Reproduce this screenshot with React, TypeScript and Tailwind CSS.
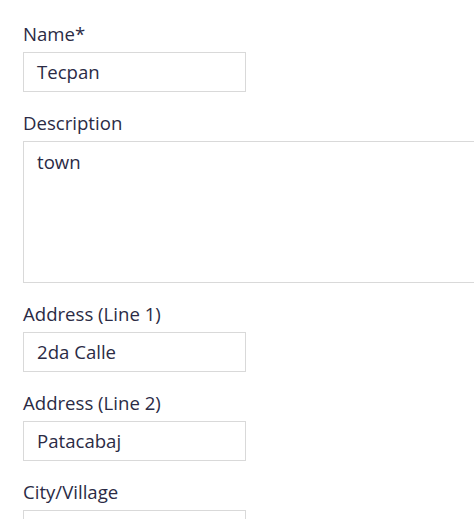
import React from "react";

const font = { fontFamily: '"Open Sans", "Noto Sans", sans-serif' };

function Field({ label, value }: { label: string; value: string }) {
  return (
    <div className="mb-[17px]">
      <div className="text-[18.6px] leading-[27px] mb-[5px] text-[#2b2b45]">{label}</div>
      <div className="w-[223px] h-[40px] border border-[#d9d9d9] bg-white pl-[13px] flex items-center text-[18.6px] text-[#2b2b45]">
        {value}
      </div>
    </div>
  );
}

export default function App() {
  return (
    <div className="w-[474px] h-[519px] overflow-hidden bg-white pt-[20px] pl-[23px]" style={font}>
      <Field label="Name*" value="Tecpan" />
      <div className="mb-[17px]">
        <div className="text-[18.6px] leading-[27px] mb-[5px] text-[#2b2b45]">Description</div>
        <div className="w-[480px] h-[142px] border border-[#d9d9d9] bg-white pl-[13px] pt-[6px] text-[18.6px] leading-[27px] text-[#2b2b45]">
          town
        </div>
      </div>
      <Field label="Address (Line 1)" value="2da Calle" />
      <Field label="Address (Line 2)" value="Patacabaj" />
      <Field label="City/Village" value="" />
    </div>
  );
}
